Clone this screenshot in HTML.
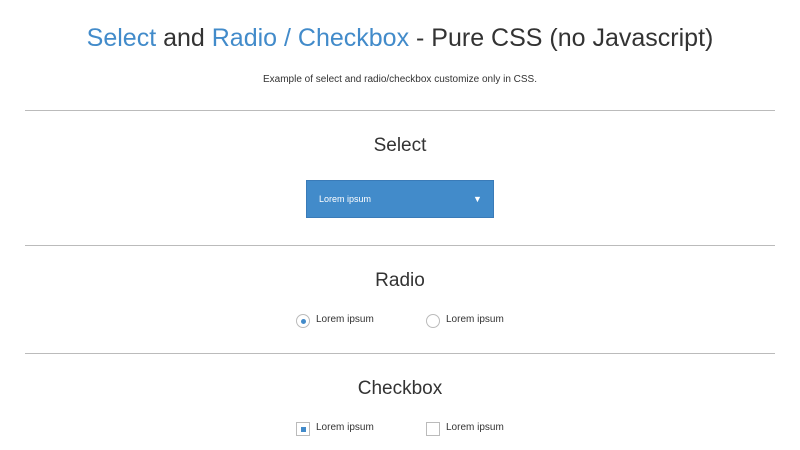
<!DOCTYPE html>
<html><head><style>
body{margin:0;width:800px;height:450px;background:#fff;font-family:"Liberation Sans",sans-serif;color:#333;position:relative;overflow:hidden}
.a{position:absolute}
.c{left:0;width:800px;text-align:center}
.b{color:#428bca}
hr{position:absolute;left:25px;width:750px;border:0;border-top:1px solid #bbb;margin:0}
.t{font-size:10px;color:#333}
.r{width:14px;height:14px;border:1px solid #bbb;border-radius:50%;box-sizing:border-box}
.k{width:14px;height:14px;border:1px solid #bbb;box-sizing:border-box}
</style></head><body>
<div class="a c" style="top:20px;font-size:25px;line-height:36px">
<span class="b">Select</span> and <span class="b">Radio / Checkbox</span> - Pure CSS (no Javascript)</div>
<div class="a c" style="top:74px;font-size:10px">Example of select and radio/checkbox customize only in CSS.</div>
<hr style="top:110px">
<div class="a c" style="top:135px;font-size:19px">Select</div>
<div class="a" style="left:306px;top:180px;width:188px;height:38px;background:#428bca;border:1px solid #3a7bb8;box-sizing:border-box"></div>
<div class="a" style="left:319px;top:194px;font-size:9px;color:#fff">Lorem ipsum</div>
<div class="a" style="left:473px;top:194px;font-size:9px;color:#fff">▼</div>
<hr style="top:245px">
<div class="a c" style="top:270px;font-size:19px">Radio</div>
<div class="a r" style="left:296px;top:314px;display:flex;align-items:center;justify-content:center"><div style="width:5px;height:5px;border-radius:50%;background:#428bca"></div></div>
<div class="a t" style="left:316px;top:314px">Lorem ipsum</div>
<div class="a r" style="left:426px;top:314px"></div>
<div class="a t" style="left:446px;top:314px">Lorem ipsum</div>
<hr style="top:353px">
<div class="a c" style="top:378px;font-size:19px">Checkbox</div>
<div class="a k" style="left:296px;top:422px;display:flex;align-items:center;justify-content:center"><div style="width:5px;height:5px;background:#428bca"></div></div>
<div class="a t" style="left:316px;top:422px">Lorem ipsum</div>
<div class="a k" style="left:426px;top:422px"></div>
<div class="a t" style="left:446px;top:422px">Lorem ipsum</div>
</body></html>
